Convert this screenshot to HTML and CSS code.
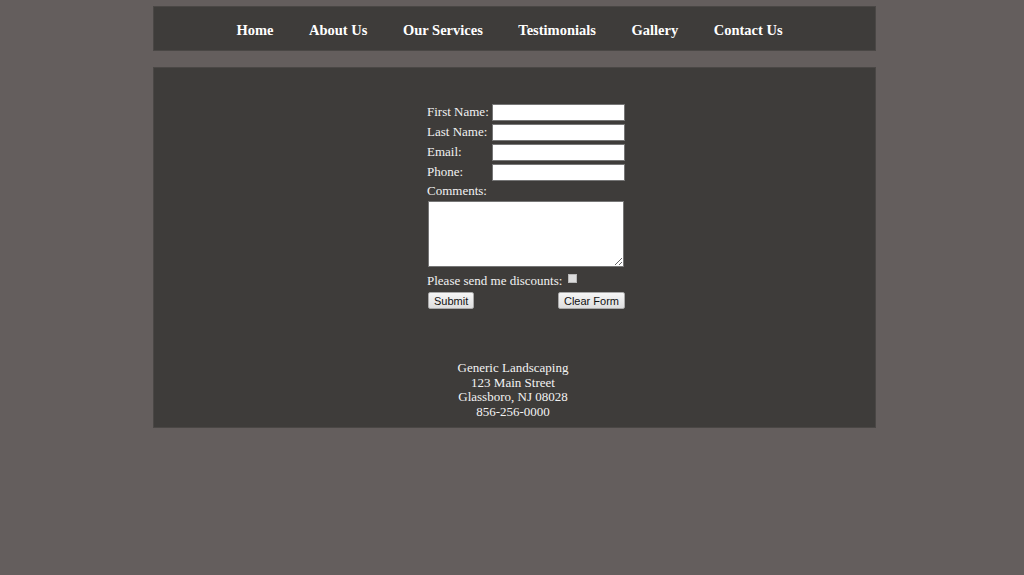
FILE: index.html
```html
<!DOCTYPE html>
<html>
<head>
<meta charset="utf-8">
<title>Contact Us - Generic Landscaping</title>
<link rel="stylesheet" href="styles.css">
</head>
<body>
<div class="page">
  <header class="header">
    <nav class="nav">
      <a href="#">Home</a>
      <a href="#">About Us</a>
      <a href="#">Our Services</a>
      <a href="#">Testimonials</a>
      <a href="#">Gallery</a>
      <a href="#">Contact Us</a>
    </nav>
  </header>
  <main class="main">
    <form class="form">
      <div class="row"><label class="lbl">First Name:</label><input class="field" type="text"></div>
      <div class="row"><label class="lbl">Last Name:</label><input class="field" type="text"></div>
      <div class="row"><label class="lbl">Email:</label><input class="field" type="text"></div>
      <div class="row"><label class="lbl">Phone:</label><input class="field" type="text"></div>
      <div class="comments-label">Comments:</div>
      <textarea class="comments"></textarea>
      <div class="discount">Please send me discounts: <span class="check"></span></div>
      <div class="buttons">
        <button type="button" class="btn">Submit</button>
        <button type="button" class="btn">Clear Form</button>
      </div>
    </form>
    <footer class="footer">
      <div>Generic Landscaping</div>
      <div>123 Main Street</div>
      <div>Glassboro, NJ 08028</div>
      <div>856-256-0000</div>
    </footer>
  </main>
</div>
</body>
</html>
```
FILE: styles.css
```css
html, body {
  margin: 0;
  padding: 0;
  background: #645e5d;
  font-family: "Liberation Serif", "Times New Roman", serif;
  color: #f2f2f2;
}
.page {
  width: 723px;
  margin-left: 153px;
  padding-top: 6px;
}
.header {
  background: #3e3c3a;
  border: 1px solid #4a4745;
  box-sizing: border-box;
  height: 45px;
  display: flex;
  align-items: center;
  justify-content: center;
}
.nav {
  display: flex;
  gap: 35.5px;
  margin-left: -10px;
  margin-top: 3px;
}
.nav a {
  color: #ffffff;
  text-decoration: none;
  font-weight: bold;
  font-size: 14.5px;
}
.main {
  margin-top: 16px;
  height: 361px;
  background: #3e3c3a;
  border: 1px solid #4a4745;
  box-sizing: border-box;
  padding-top: 34px;
}
.form {
  width: 198px;
  margin-left: 273px;
  font-size: 13px;
}
.row {
  display: flex;
  align-items: center;
  height: 20px;
}
.lbl {
  width: 65px;
  white-space: nowrap;
}
.field {
  width: 133px;
  height: 17px;
  box-sizing: border-box;
  margin: 0;
  border: 1px solid #767676;
  background: #fff;
  padding: 0;
}
.comments-label {
  height: 19px;
  line-height: 18px;
}
.comments {
  display: block;
  width: 196px;
  height: 66px;
  box-sizing: border-box;
  margin: 0 0 0 1px;
  border: 1px solid #767676;
  background: #fff;
}
.discount {
  margin-top: 5px;
  height: 18px;
  display: flex;
  align-items: center;
}
.check {
  display: inline-block;
  width: 9px;
  height: 9px;
  margin-left: 6px;
  margin-top: -6px;
  background: #dcdcdc;
  border: 1px solid #b8b8b8;
  box-sizing: border-box;
}
.buttons {
  display: flex;
  justify-content: space-between;
  margin-left: 1px;
  margin-top: 2px;
}
.btn {
  font-family: "Liberation Sans", Arial, sans-serif;
  font-size: 11px;
  color: #111;
  height: 17px;
  padding: 0 5px;
  margin: 0;
  background: linear-gradient(#f6f6f6, #dedede);
  border: 1px solid #a9a9a9;
  border-radius: 2px;
}
.footer {
  margin-top: 52px;
  text-align: center;
  margin-left: -3px;
  font-size: 13px;
  line-height: 14.5px;
}
```
